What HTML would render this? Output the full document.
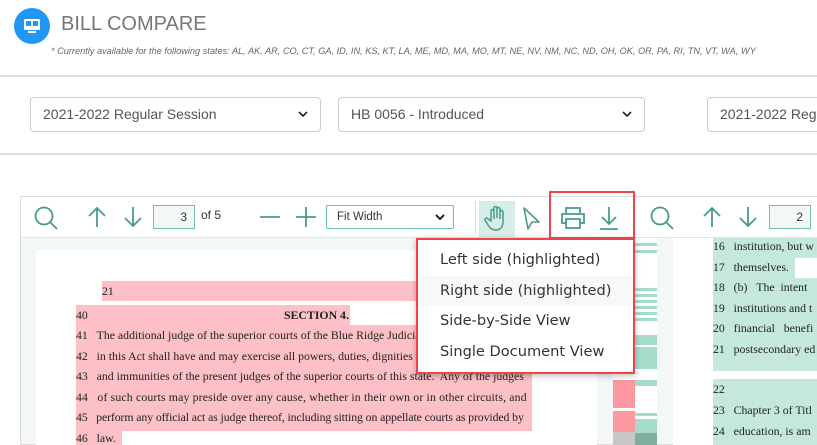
<!DOCTYPE html>
<html><head><style>
*{margin:0;padding:0;box-sizing:border-box}
html,body{width:817px;height:445px;overflow:hidden}
body{background:#fff;font-family:"Liberation Sans",sans-serif;position:relative}
.abs{position:absolute}
.sel{position:absolute;top:97px;height:35px;border:1px solid #ccc;border-radius:4px;font-size:14px;color:#555;padding:8px 12px;background:#fff;overflow:hidden;white-space:nowrap}
.sel svg{position:absolute;right:12px;top:13px}
.tb svg{position:absolute}
.ln{position:absolute;font-family:"Liberation Serif",serif;font-size:11.8px;color:#222;height:20px;line-height:20px;white-space:nowrap}
.pk{background:#fdc0c6}
.gr{background:#c5e8dc}
.mm{position:absolute;height:4px}
.mi{height:30.5px;padding-left:22px;color:#333;line-height:30px;font-family:'DejaVu Sans',sans-serif;font-size:14.6px}
</style></head><body>
<div class="abs" style="left:14px;top:8px;width:36px;height:36px;border-radius:50%;background:#2196f3"></div>
<svg class="abs" style="left:22px;top:16px" width="20" height="20" viewBox="0 0 20 20"><rect x="2" y="3" width="16" height="11" fill="#fff" rx="1"/><rect x="4" y="5" width="5" height="5" fill="#2196f3"/><rect x="11" y="5" width="5" height="5" fill="#2196f3"/><rect x="6" y="15" width="8" height="2" fill="#fff"/></svg>
<div class="abs" style="left:61px;top:13px;font-size:20px;color:#777">BILL COMPARE</div>
<div class="abs" style="left:51px;top:46px;font-size:9.2px;color:#666;font-style:italic;white-space:nowrap">* Currently available for the following states: AL, AK, AR, CO, CT, GA, ID, IN, KS, KT, LA, ME, MD, MA, MO, MT, NE, NV, NM, NC, ND, OH, OK, OR, PA, RI, TN, VT, WA, WY</div>
<div class="abs" style="left:0;top:75px;width:817px;height:2px;background:#ddd"></div>
<div class="sel" style="left:30px;width:291px">2021-2022 Regular Session<svg width="10" height="7"><path d="M1 1l4 4 4-4" stroke="#222" stroke-width="1.6" fill="none"/></svg></div>
<div class="sel" style="left:338px;width:307px">HB 0056 - Introduced<svg width="10" height="7"><path d="M1 1l4 4 4-4" stroke="#222" stroke-width="1.6" fill="none"/></svg></div>
<div class="sel" style="left:707px;width:110px;border-right:none;border-radius:4px 0 0 4px">2021-2022 Regular Session</div>
<div class="abs" style="left:0;top:153px;width:817px;height:2px;background:#ddd"></div>

<div class="abs" style="left:20px;top:196px;width:797px;height:249px;border:1px solid #ddd;border-right:none;background:#f3f7f7"></div>
<div class="abs tb" style="left:21px;top:197px;width:796px;height:41px;background:#fff;border-bottom:1px solid #e4e4e4;overflow:hidden">
<svg style="left:12px;top:8px" width="26" height="26"><circle cx="11" cy="11" r="8.5" stroke="#4a9a8c" stroke-width="1.8" fill="none"/><path d="M17 17l7 7" stroke="#4a9a8c" stroke-width="1.8"/></svg>
<svg style="left:66px;top:9px" width="20" height="22"><path d="M10 2v19M2 10l8-8 8 8" stroke="#4a9a8c" stroke-width="1.8" fill="none"/></svg>
<svg style="left:102px;top:9px" width="20" height="22"><path d="M10 1v19M2 12l8 8 8-8" stroke="#4a9a8c" stroke-width="1.8" fill="none"/></svg>
<div class="abs" style="left:132px;top:8px;width:42px;height:24px;border:1px solid #6cc0ad;background:#f3f8f7;text-align:right;padding:4px 7px;font-size:12px;color:#333">3</div>
<div class="abs" style="left:180px;top:11px;font-size:12px;color:#333">of 5</div>
<svg style="left:238px;top:12px" width="22" height="16"><path d="M1 8h20" stroke="#4a9a8c" stroke-width="1.8"/></svg>
<svg style="left:274px;top:9px" width="22" height="22"><path d="M1 11h20M11 1v20" stroke="#4a9a8c" stroke-width="1.8"/></svg>
<div class="abs" style="left:305px;top:8px;width:128px;height:24px;border:1px solid #6cc0ad;border-radius:2px;padding:5px 10px;font-size:11.5px;color:#333">Fit Width<svg style="right:8px;top:8px" width="10" height="7"><path d="M1 1l4 4 4-4" stroke="#222" stroke-width="2" fill="none"/></svg></div>
<div class="abs" style="left:454px;top:4px;width:1px;height:32px;background:#ddd"></div>
<div class="abs" style="left:458px;top:4px;width:36px;height:37px;background:#d7ede8"></div>
<svg style="left:463px;top:8px" width="26" height="28"><path d="M7 16V6a1.5 1.5 0 013 0v8V3a1.5 1.5 0 013 0v10V4a1.5 1.5 0 013 0v10V7a1.5 1.5 0 013 0v10c0 5-3 8-7 8s-6-2-8-5l-3-5a1.5 1.5 0 012.5-1.5z" stroke="#4a9a8c" stroke-width="1.5" fill="none"/></svg>
<svg style="left:500px;top:9px" width="22" height="26"><path d="M3 2l15 14h-7l-4 7z" stroke="#4a9a8c" stroke-width="1.6" fill="none" stroke-linejoin="round"/></svg>
<div class="abs" style="left:528px;top:4px;width:1px;height:32px;background:#ddd"></div>
<svg style="left:538px;top:9px" width="28" height="24"><path d="M7 7V2h14v5M7 17H3V8h22v9h-4M7 13h14v9H7z" stroke="#4a9a8c" stroke-width="1.8" fill="none"/></svg>
<svg style="left:577px;top:8px" width="22" height="26"><path d="M11 2v16M4 12l7 7 7-7M2 24h18" stroke="#4a9a8c" stroke-width="1.8" fill="none"/></svg>
<svg style="left:628px;top:8px" width="26" height="26"><circle cx="11" cy="11" r="8.5" stroke="#4a9a8c" stroke-width="1.8" fill="none"/><path d="M17 17l7 7" stroke="#4a9a8c" stroke-width="1.8"/></svg>
<svg style="left:681px;top:9px" width="20" height="22"><path d="M10 2v19M2 10l8-8 8 8" stroke="#4a9a8c" stroke-width="1.8" fill="none"/></svg>
<svg style="left:717px;top:9px" width="20" height="22"><path d="M10 1v19M2 12l8 8 8-8" stroke="#4a9a8c" stroke-width="1.8" fill="none"/></svg>
<div class="abs" style="left:748px;top:8px;width:42px;height:24px;border:1px solid #6cc0ad;background:#f3f8f7;text-align:right;padding:4px 7px;font-size:12px;color:#333">2</div>
</div>

<div class="abs" style="left:36px;top:250px;width:561px;height:195px;background:#fff"></div>
<div class="ln pk" style="left:102px;top:281px;width:340px">21</div>
<div class="ln pk" style="left:76px;top:305px;width:274px">40</div>
<div class="ln" style="left:284px;top:305px;font-weight:bold">SECTION 4.</div>
<div class="abs pk" style="left:76px;top:325px;width:456px;height:106px"></div>
<div class="ln" style="left:76px;top:325px">41&nbsp;&nbsp;&nbsp;The additional judge of the superior courts of the Blue Ridge Judicial</div>
<div class="ln" style="left:76px;top:346px">42&nbsp;&nbsp;&nbsp;in this Act shall have and may exercise all powers, duties, dignities</div>
<div class="ln" style="left:76px;top:366px">43&nbsp;&nbsp;&nbsp;and immunities of the present judges of the superior courts of this state.&nbsp; Any of the judges</div>
<div class="ln" style="left:76px;top:387px;letter-spacing:0.15px">44&nbsp;&nbsp;&nbsp;of such courts may preside over any cause, whether in their own or in other circuits, and</div>
<div class="ln" style="left:76px;top:407px;letter-spacing:-0.1px">45&nbsp;&nbsp;&nbsp;perform any official act as judge thereof, including sitting on appellate courts as provided by</div>
<div class="ln pk" style="left:76px;top:428px;width:46px">46&nbsp;&nbsp;&nbsp;law.</div>

<div class="abs" style="left:613px;top:238px;width:44px;height:207px;background:#fff"></div>
<div class="mm" style="left:635px;top:243px;width:22px;height:3px;background:#a5dccb"></div>
<div class="mm" style="left:635px;top:250px;width:22px;height:3px;background:#a5dccb"></div>
<div class="abs" style="left:635px;top:288px;width:22px;height:36px;background:repeating-linear-gradient(#a5dccb 0 3px,#fff 3px 6px)"></div>
<div class="mm" style="left:635px;top:335px;width:22px;height:10px;background:#a5dccb"></div>
<div class="mm" style="left:635px;top:347px;width:22px;height:22px;background:#a5dccb"></div>
<div class="mm" style="left:635px;top:380px;width:22px;height:6px;background:#a5dccb"></div>
<div class="mm" style="left:613px;top:380px;width:22px;height:28px;background:#fd98a3"></div>
<div class="mm" style="left:613px;top:411px;width:22px;height:21px;background:#fd98a3"></div>
<div class="mm" style="left:635px;top:413px;width:22px;height:3px;background:#a5dccb"></div>
<div class="mm" style="left:635px;top:419px;width:22px;height:14px;background:#a5dccb"></div>
<div class="mm" style="left:613px;top:432px;width:22px;height:13px;background:#c8c8c8"></div>
<div class="mm" style="left:635px;top:433px;width:22px;height:12px;background:#7faea0"></div>

<div class="abs" style="left:673px;top:238px;width:144px;height:207px;background:#fff"></div>
<div class="abs gr" style="left:713px;top:238px;width:104px;height:133px"></div>
<div class="abs" style="left:795px;top:258px;width:22px;height:20px;background:#fff"></div>
<div class="ln" style="left:713px;top:236px">16&nbsp;&nbsp;&nbsp;institution, but w</div>
<div class="ln" style="left:713px;top:257px">17&nbsp;&nbsp;&nbsp;themselves.</div>
<div class="ln" style="left:713px;top:277px">18&nbsp;&nbsp;&nbsp;(b)&nbsp;&nbsp;&nbsp;The&nbsp; intent</div>
<div class="ln" style="left:713px;top:298px">19&nbsp;&nbsp;&nbsp;institutions and t</div>
<div class="ln" style="left:713px;top:318px">20&nbsp;&nbsp;&nbsp;financial&nbsp;&nbsp; benefi</div>
<div class="ln" style="left:713px;top:339px">21&nbsp;&nbsp;&nbsp;postsecondary ed</div>
<div class="abs gr" style="left:713px;top:379px;width:104px;height:66px"></div>
<div class="ln" style="left:713px;top:379px">22</div>
<div class="ln" style="left:713px;top:400px">23&nbsp;&nbsp;&nbsp;Chapter 3 of Titl</div>
<div class="ln" style="left:713px;top:421px">24&nbsp;&nbsp;&nbsp;education, is am</div>

<div class="abs" style="left:549px;top:191px;width:86px;height:48px;border:2px solid #f0434b"></div>
<div class="abs" style="left:416px;top:238px;width:219px;height:136px;border:2px solid #f0434b;background:#fff;box-shadow:0 2px 6px rgba(0,0,0,.25);padding-top:5px">
<div class="mi">Left side (highlighted)</div>
<div class="mi" style="background:#f8f8f8">Right side (highlighted)</div>
<div class="mi">Side-by-Side View</div>
<div class="mi">Single Document View</div>
</div>
</body></html>
